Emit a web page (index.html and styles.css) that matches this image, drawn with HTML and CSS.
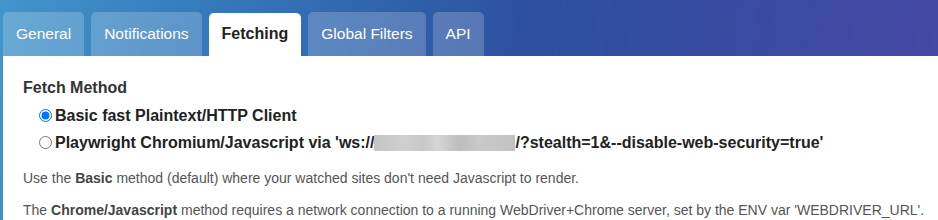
FILE: index.html
```html
<!DOCTYPE html>
<html lang="en">
  <head>
    <meta charset="UTF-8" />
    <title>Settings - Fetching</title>
    <link rel="stylesheet" href="styles.css">
  </head>
  <body>
    <!-- Tabs -->
    <div class="tabs">
      <a href="#general" class="tab">General</a>
      <a href="#notifications" class="tab">Notifications</a>
      <a href="#fetching" class="tab active">Fetching</a>
      <a href="#filters" class="tab">Global Filters</a>
      <a href="#api" class="tab">API</a>
    </div>

    <!-- Fetching panel -->
    <div class="panel">
      <div class="field-label">Fetch Method</div>
      <ul class="radio-list">
        <li>
          <input type="radio" id="fetch_basic" name="fetch_backend" checked />
          <label for="fetch_basic">Basic fast Plaintext/HTTP Client</label>
        </li>
        <li>
          <input type="radio" id="fetch_chrome" name="fetch_backend" />
          <label for="fetch_chrome">Playwright Chromium/Javascript via 'ws://<span class="redacted"></span>/?stealth=1&amp;--disable-web-security=true'</label>
        </li>
      </ul>
      <p class="help">Use the <strong>Basic</strong> method (default) where your watched sites don't need Javascript to render.</p>
      <p class="help">The <strong>Chrome/Javascript</strong> method requires a network connection to a running WebDriver+Chrome server, set by the ENV var 'WEBDRIVER_URL'.</p>
    </div>
  </body>
</html>
```

FILE: styles.css
```css
* {
  margin: 0;
  padding: 0;
  box-sizing: border-box;
}

body {
  font-family: "Liberation Sans", Arial, sans-serif;
  background: linear-gradient(100deg, #4295cb 0%, #3475b8 25%, #2d4f9f 55%, #3b4aa2 80%, #4748a4 100%);
  min-height: 100vh;
}

.tabs {
  display: flex;
  gap: 7px;
  padding: 12px 0 0 3px;
}

.tab {
  display: block;
  padding: 12px 13px;
  line-height: 20px;
  font-size: 15.5px;
  color: #fff;
  text-decoration: none;
  background-color: rgba(255, 255, 255, 0.2);
  border-radius: 5px 5px 0 0;
}

.tab.active {
  background-color: #fff;
  color: #222;
  font-weight: bold;
  font-size: 16px;
  margin-top: 1px;
  padding-top: 11px;
}

.panel {
  background-color: #fff;
  margin-left: 3px;
  padding: 22px 2px 20px 20px;
  min-height: 163px;
}

.field-label {
  font-size: 16px;
  font-weight: bold;
  color: #333;
  line-height: 20px;
}

.radio-list {
  list-style: none;
  padding-left: 16px;
  margin-top: 4px;
}

.radio-list li {
  display: flex;
  align-items: center;
  height: 27px;
}

.radio-list input {
  width: 13px;
  height: 13px;
  margin: 0 3px 0 0;
}

.radio-list label {
  font-size: 16px;
  font-weight: bold;
  color: #222;
}

.redacted {
  display: inline-block;
  width: 141px;
  height: 16px;
  vertical-align: -3px;
  background: linear-gradient(to right, #c4c4c4, #cfcfcf 20%, #c8c8c8 35%, #d6d6d6 45%, #bdbdbd 60%, #c9c9c9 75%, #c2c2c2);
}

.help {
  font-size: 14px;
  color: #555;
  line-height: 16px;
  margin-top: 14px;
  white-space: nowrap;
}

.help + .help {
  margin-top: 16px;
}

.help strong {
  color: #444;
}
```
